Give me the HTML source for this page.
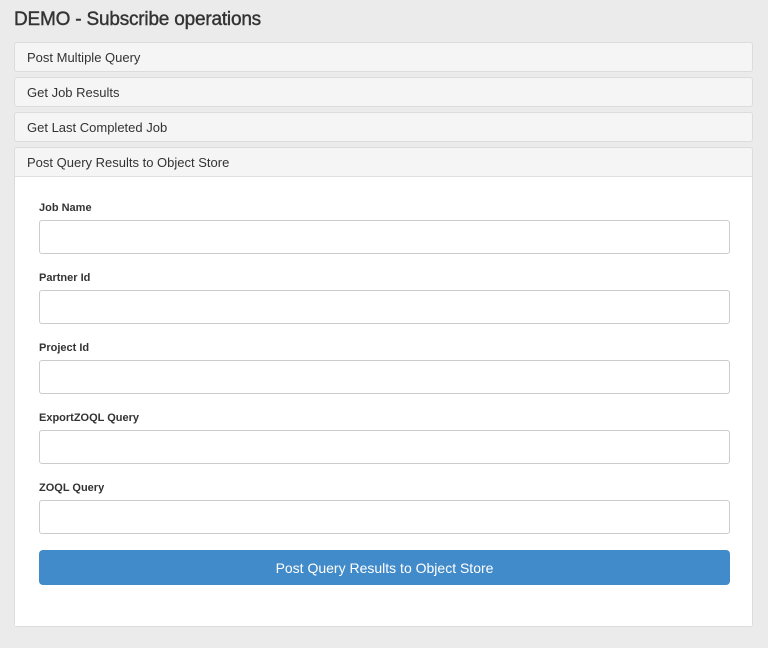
<!DOCTYPE html>
<html><head><style>
body{margin:0;background:#ebebeb;font-family:"Liberation Sans",sans-serif;color:#333;width:768px;height:648px;overflow:hidden;position:relative}
h1{position:absolute;left:14px;top:9px;margin:0;font-size:19px;font-weight:normal;color:#333;letter-spacing:-0.2px;-webkit-text-stroke:0.4px #333}
.p{position:absolute;left:14px;width:737px;border:1px solid #dcdcdc;border-radius:3px;background:#f5f5f5;}
.h{height:28px;line-height:29px;padding-left:12px;font-size:13px;color:#333}
.body{background:#fff;border-top:1px solid #e0e0e0;height:449px;position:relative}
label{position:absolute;left:24px;font-size:11px;font-weight:bold;color:#333}
.in{position:absolute;left:24px;width:689px;height:32px;border:1px solid #ccc;border-radius:3px;background:#fff}
.btn{position:absolute;left:24px;top:373px;width:691px;height:35px;background:#428bca;border-radius:4px;color:#fff;font-size:14px;text-align:center;line-height:36px}
</style></head><body>
<h1>DEMO - Subscribe operations</h1>
<div class="p" style="top:42px"><div class="h">Post Multiple Query</div></div>
<div class="p" style="top:77px"><div class="h">Get Job Results</div></div>
<div class="p" style="top:112px"><div class="h">Get Last Completed Job</div></div>
<div class="p" style="top:147px"><div class="h">Post Query Results to Object Store</div>
<div class="body">
<label style="top:25px">Job Name</label><div class="in" style="top:43px"></div>
<label style="top:95px">Partner Id</label><div class="in" style="top:113px"></div>
<label style="top:165px">Project Id</label><div class="in" style="top:183px"></div>
<label style="top:235px">ExportZOQL Query</label><div class="in" style="top:253px"></div>
<label style="top:305px">ZOQL Query</label><div class="in" style="top:323px"></div>
<div class="btn">Post Query Results to Object Store</div>
</div></div>
</body></html>
